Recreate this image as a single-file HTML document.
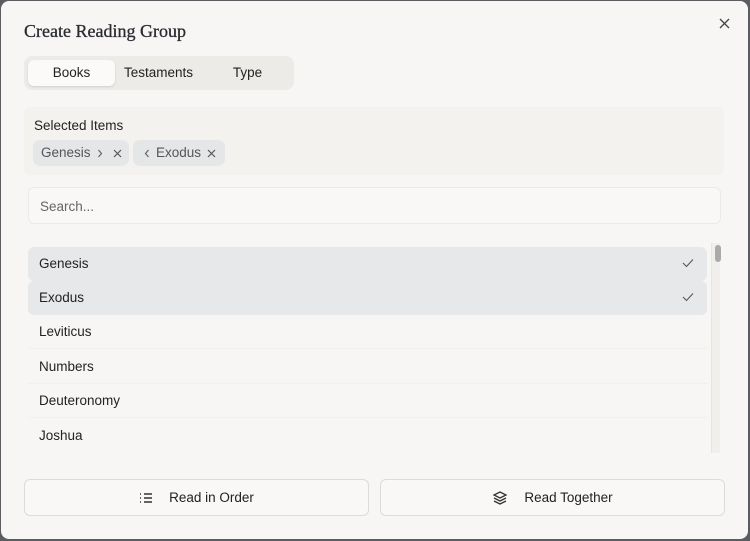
<!DOCTYPE html>
<html><head><style>
*{box-sizing:border-box;margin:0;padding:0}
body{width:750px;height:541px;background:#5a5c60;font-family:"Liberation Sans",sans-serif;overflow:hidden;position:relative}
.m{position:absolute;left:1px;top:1px;width:747px;height:538px;background:#f7f6f4;border-radius:8px}
.t{position:absolute;left:24px;top:21px;font-family:"Liberation Serif",serif;font-size:18px;color:#2a2b30;-webkit-text-stroke:0.3px #2a2b30}
.x{position:absolute;left:719px;top:18px}
.tabs{position:absolute;left:24px;top:56px;width:270px;height:34px;background:#ecebe8;border-radius:8px}
.tab{position:absolute;top:4px;height:26px;line-height:26px;font-size:13.5px;color:#222;text-align:center}
.tab.a{background:#fbfaf9;border-radius:6px;box-shadow:0 1px 2px rgba(0,0,0,.12)}
.sel{position:absolute;left:24px;top:107px;width:700px;height:68px;background:#f3f2ef;border-radius:6px}
.sl{position:absolute;left:10px;top:11px;font-size:13.5px;color:#222}
.chip{position:absolute;top:33px;height:26px;line-height:26px;background:#e5e6e8;border-radius:7px;font-size:13.5px;color:#555;display:flex;align-items:center;gap:6px}
.s{position:absolute;left:28px;top:187px;width:693px;height:37px;border:1px solid #ebeae7;border-radius:6px;background:#f9f8f6;font-size:13.5px;color:#666;padding:11px 11px}
.row{position:absolute;left:28px;width:679px;height:34px;line-height:34px;font-size:13.5px;color:#222;padding-left:11px;border-bottom:1px dotted #ecebe8}
.row.on{background:#e7e8ea;border-radius:6px;border:none}
.ck{position:absolute;right:13px;top:11px}
.sb{position:absolute;left:711px;top:243px;width:9px;height:210px;background:#f0efec;border-left:1px solid #e6e5e2}
.th{position:absolute;left:715px;top:245px;width:6px;height:17px;background:#aaa;border-radius:3px}
.b{position:absolute;top:479px;height:37px;border:1px solid #dcdbd8;border-radius:6px;background:#f9f8f6;font-size:13.5px;color:#222;display:flex;align-items:center;justify-content:center;gap:16px}
</style></head><body>
<div class="m">
</div>
<div class="t">Create Reading Group</div>
<svg class="x" width="11" height="11" viewBox="0 0 11 11" stroke="#444" stroke-width="1.3"><path d="M1 1l9 9M10 1l-9 9"/></svg>
<div class="tabs">
<div class="tab a" style="left:4px;width:87px">Books</div>
<div class="tab" style="left:91px;width:87px">Testaments</div>
<div class="tab" style="left:180px;width:87px">Type</div>
</div>
<div class="sel"><div class="sl">Selected Items</div>
<div class="chip" style="left:9px;width:96px;padding-left:8px">Genesis
<svg width="6" height="9" viewBox="0 0 6 9" fill="none" stroke="#666" stroke-width="1.2"><path d="M1.5 1l3 3.5-3 3.5"/></svg>
<svg style="margin-left:4px" width="9" height="9" viewBox="0 0 9 9" stroke="#555" stroke-width="1.2"><path d="M1 1l7 7M8 1l-7 7"/></svg></div>
<div class="chip" style="left:109px;width:92px;padding-left:11px">
<svg width="6" height="9" viewBox="0 0 6 9" fill="none" stroke="#666" stroke-width="1.2"><path d="M4.5 1l-3 3.5 3 3.5"/></svg>Exodus
<svg width="9" height="9" viewBox="0 0 9 9" stroke="#555" stroke-width="1.2"><path d="M1 1l7 7M8 1l-7 7"/></svg></div>
</div>
<div class="s">Search...</div>
<div class="row on" style="top:247px">Genesis<svg class="ck" width="12" height="10" viewBox="0 0 12 10" fill="none" stroke="#555" stroke-width="1.1"><path d="M1 5l3.5 3.5L11 1.5"/></svg></div>
<div class="row on" style="top:281px">Exodus<svg class="ck" width="12" height="10" viewBox="0 0 12 10" fill="none" stroke="#555" stroke-width="1.1"><path d="M1 5l3.5 3.5L11 1.5"/></svg></div>
<div class="row" style="top:315px">Leviticus</div>
<div class="row" style="top:350px">Numbers</div>
<div class="row" style="top:384px">Deuteronomy</div>
<div class="row" style="top:419px;border:none">Joshua</div>
<div class="sb"></div><div class="th"></div>
<div class="b" style="left:24px;width:345px"><svg width="14" height="12" viewBox="0 0 14 12" fill="none" stroke="#333" stroke-width="1.4"><path d="M1 2h1M1 6h1M1 10h1M5 2h8M5 6h8M5 10h8"/></svg>Read in Order</div>
<div class="b" style="left:380px;width:345px"><svg width="16" height="16" viewBox="0 0 16 16" fill="none" stroke="#333" stroke-width="1.3"><path d="M8 2L14 5 8 8 2 5Z M2 8l6 3 6-3 M2 11l6 3 6-3"/></svg>Read Together</div>
</body></html>
